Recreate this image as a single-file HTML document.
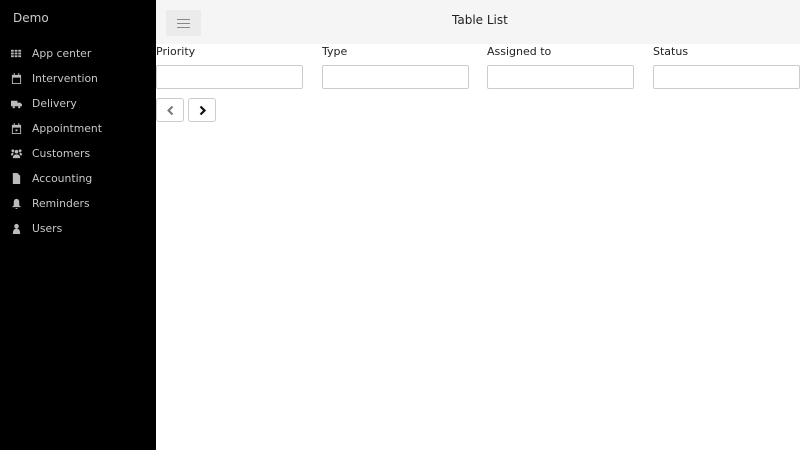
<!DOCTYPE html>
<html><head><style>
*{box-sizing:border-box;margin:0;padding:0}
body{width:800px;height:450px;overflow:hidden;background:#fff;font-family:"DejaVu Sans","Liberation Sans",sans-serif;position:relative}
.sb{position:absolute;left:0;top:0;width:156px;height:450px;background:#000;color:#c8c8c8}
.demo{position:absolute;left:13px;top:11px;font-size:12px;color:#ccc}
.it{position:absolute;left:11px;font-size:10.8px;color:#c8c8c8;display:flex;align-items:center;height:14px}
.it svg{width:11px;height:11px;margin-right:10px;fill:#bbb}
.hd{position:absolute;left:156px;top:0;width:644px;height:44px;background:#f5f5f5}
.hb{position:absolute;left:10px;top:10px;width:35px;height:26px;background:#ebebeb;border-radius:2px}
.hb i{position:absolute;left:11px;width:13px;height:1px;background:#888}
.tt{position:absolute;left:296px;top:13px;font-size:12px;color:#222}
.lb{position:absolute;top:45px;font-size:11px;color:#222}
.in{position:absolute;top:65px;width:147px;height:24px;border:1px solid #ccc;border-radius:2px;background:#fff}
.bt{position:absolute;top:98px;width:28px;height:24px;border:1px solid #ccc;border-radius:3px;background:#fff}
.bt svg{position:absolute;left:9px;top:6px;width:9px;height:11px}
</style></head><body>
<div class="sb">
<div class="demo">Demo</div>
<div class="it" style="top:46px"><svg viewBox="0 0 12 12"><rect x="0" y="2" width="3" height="2"/><rect x="4" y="2" width="3" height="2"/><rect x="8" y="2" width="3" height="2"/><rect x="0" y="5" width="3" height="2"/><rect x="4" y="5" width="3" height="2"/><rect x="8" y="5" width="3" height="2"/><rect x="0" y="8" width="3" height="2"/><rect x="4" y="8" width="3" height="2"/><rect x="8" y="8" width="3" height="2"/></svg>App center</div>
<div class="it" style="top:71px"><svg viewBox="0 0 12 12"><path d="M1 2h10v10H1z M2 5v6h8V5z M3 0h1v3H3z M8 0h1v3H8z" /></svg>Intervention</div>
<div class="it" style="top:96px"><svg viewBox="0 0 12 12"><path d="M0 3h7v6H0z M7 5h3l2 2v2H7z"/><circle cx="3" cy="10" r="1.3"/><circle cx="9" cy="10" r="1.3"/></svg>Delivery</div>
<div class="it" style="top:121px"><svg viewBox="0 0 12 12"><path d="M1 2h10v10H1z M2 5v6h8V5z M3 0h1v3H3z M8 0h1v3H8z M5 7h2v2H5z"/></svg>Appointment</div>
<div class="it" style="top:146px"><svg viewBox="0 0 12 12"><circle cx="6" cy="4" r="2"/><circle cx="2" cy="3" r="1.5"/><circle cx="10" cy="3" r="1.5"/><path d="M2 11q0-4 4-4t4 4z M0 8q0-3 2-3h1L2 8z M12 8q0-3-2-3H9l1 3z"/></svg>Customers</div>
<div class="it" style="top:171px"><svg viewBox="0 0 12 12"><path d="M2 0h5l3 3v9H2z"/></svg>Accounting</div>
<div class="it" style="top:196px"><svg viewBox="0 0 12 12"><path d="M6 1q3 0 3 4v3l2 2H1l2-2V5q0-4 3-4z M5 11h2v1H5z"/></svg>Reminders</div>
<div class="it" style="top:221px"><svg viewBox="0 0 12 12"><circle cx="6" cy="3.5" r="2.5"/><path d="M2 12q0-6 4-6t4 6z"/></svg>Users</div>
</div>
<div class="hd"><div class="hb"><i style="top:9px"></i><i style="top:13px"></i><i style="top:17px"></i></div><div class="tt">Table List</div></div>
<div class="lb" style="left:156px">Priority</div>
<div class="lb" style="left:322px">Type</div>
<div class="lb" style="left:487px">Assigned to</div>
<div class="lb" style="left:653px">Status</div>
<div class="in" style="left:156px"></div>
<div class="in" style="left:322px"></div>
<div class="in" style="left:487px"></div>
<div class="in" style="left:653px"></div>
<div class="bt" style="left:156px"><svg viewBox="0 0 9 11"><path d="M6.5 1.5L2.5 5.5l4 4" stroke="#777" stroke-width="2" fill="none"/></svg></div>
<div class="bt" style="left:188px"><svg viewBox="0 0 9 11"><path d="M2.5 1.5l4 4-4 4" stroke="#111" stroke-width="2.2" fill="none"/></svg></div>
</body></html>
